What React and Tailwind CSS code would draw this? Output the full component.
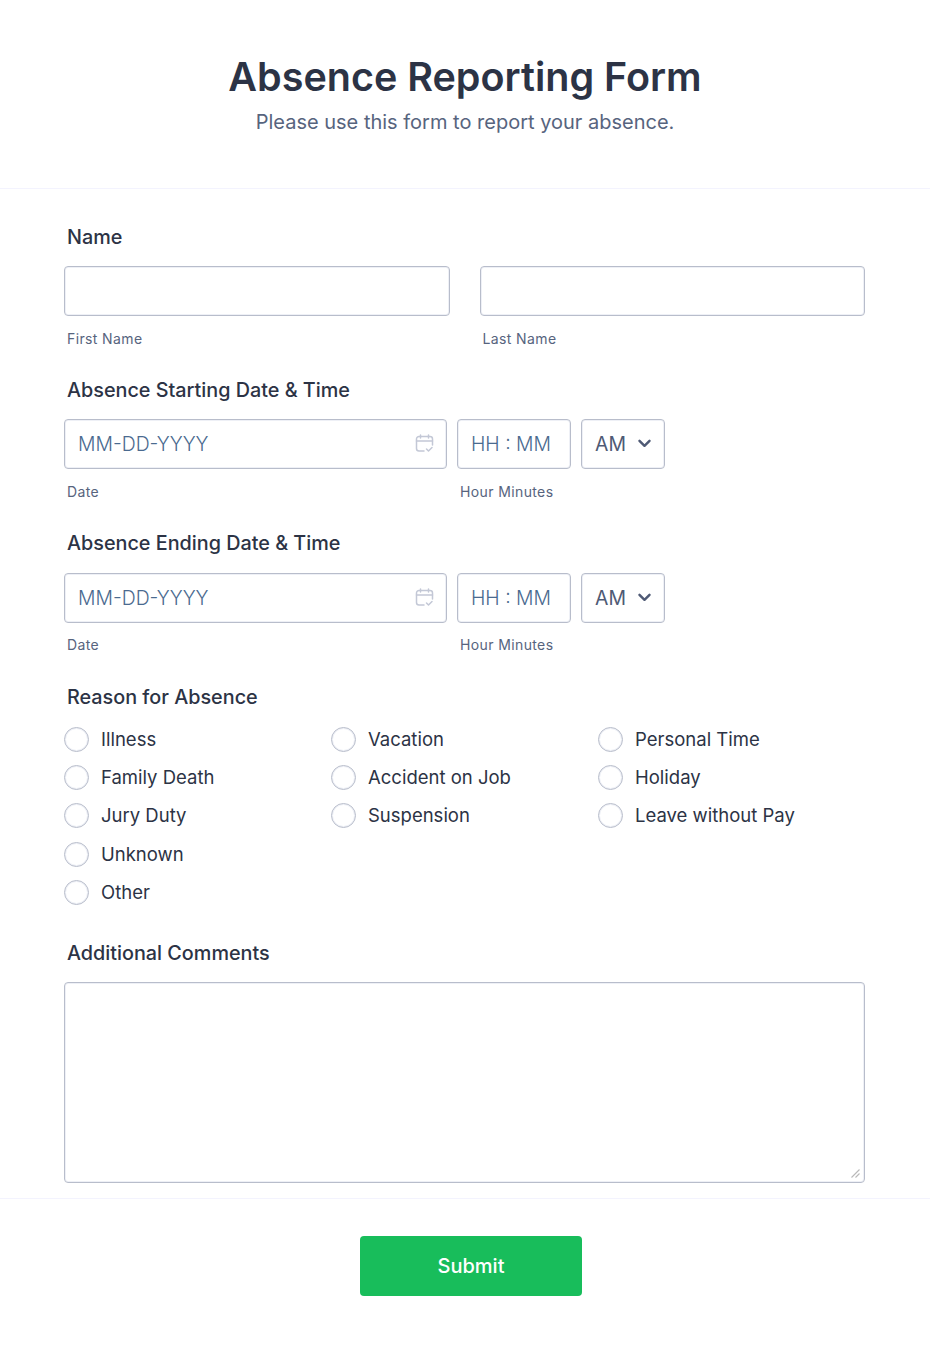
const inputCls = 'h-[49.5px] rounded-[4px] border border-[#b8bdcb] bg-white text-[19.4px] text-[#2c3345] shadow-[inset_0_0_0_1px_#eef0f6] outline-none placeholder:font-light placeholder:text-[#4a6a8f]'

const reasons = [
  ['Illness', 'Vacation', 'Personal Time'],
  ['Family Death', 'Accident on Job', 'Holiday'],
  ['Jury Duty', 'Suspension', 'Leave without Pay'],
  ['Unknown'],
  ['Other'],
]

function Label({ children, className = '' }) {
  return <div className={`pl-[3px] text-[19.8px] leading-[28px] font-medium text-[#2c3345] ${className}`}>{children}</div>
}

function Sub({ children, className = 'mt-[13.5px]' }) {
  return <div className={`pl-[3px] text-[14px] leading-[20px] tracking-[0.38px] text-[#57647e] ${className}`}>{children}</div>
}

function CalendarIcon() {
  return (
    <svg className="absolute right-[13px] top-[15px]" width="19" height="19" viewBox="0 0 19 19" fill="none" stroke="#c3c8d6" strokeWidth="1.5" strokeLinecap="round" strokeLinejoin="round">
      <path d="M9 17H4a2.5 2.5 0 0 1-2.5-2.5V5A2.5 2.5 0 0 1 4 2.5h11A2.5 2.5 0 0 1 17.5 5v6" />
      <path d="M1.5 7h16M5.5 1v3M13.5 1v3" />
      <path d="m11.5 15 2 2 3.5-3.5" />
    </svg>
  )
}

function DateRow({ title, className, rowTop = 'mt-[15px]', subTop }) {
  return (
    <div className={className}>
      <Label>{title}</Label>
      <div className={`${rowTop} flex`}>
        <div className="w-[383px]">
          <div className="relative">
            <input className={`${inputCls} w-full pl-[13px]`} placeholder="MM-DD-YYYY" />
            <CalendarIcon />
          </div>
          <Sub className={subTop}>Date</Sub>
        </div>
        <div className="ml-[10px] w-[114px]">
          <input className={`${inputCls} w-full pl-[13px]`} placeholder="HH : MM" />
          <Sub className={subTop}>Hour Minutes</Sub>
        </div>
        <div className={`${inputCls} ml-[10px] flex w-[84px] items-center justify-between pr-[13px] pl-[13px] text-[#4f5a75]`}>
          <span className="pt-[1px]">AM</span>
          <svg width="13" height="9" viewBox="0 0 13 9" fill="none" stroke="#4f5a75" strokeWidth="2.4" strokeLinecap="round" strokeLinejoin="round">
            <path d="M1.5 1.8 6.5 6.8l5-5" />
          </svg>
        </div>
      </div>
    </div>
  )
}

export default function App() {
  return (
    <div className="min-h-[1346px] bg-white font-['Inter',sans-serif]">
      <header className="h-[189px] border-b border-[#f3f3fe] pt-[52px] text-center">
        <h1 className="text-[39.5px] leading-[50px] font-semibold text-[#2c3345]">Absence Reporting Form</h1>
        <p className="mt-[6px] text-[20px] leading-[28px] text-[#57647e]">Please use this form to report your absence.</p>
      </header>

      <main className="pt-[34px] pr-[65px] pl-[64px]">
        <Label>Name</Label>
        <div className="mt-[15px] grid grid-cols-2 gap-[30px]">
          <div>
            <input className={`${inputCls} w-full`} />
            <Sub>First Name</Sub>
          </div>
          <div>
            <input className={`${inputCls} w-full`} />
            <Sub>Last Name</Sub>
          </div>
        </div>

        <DateRow title="Absence Starting Date & Time" className="mt-[27px]" />
        <DateRow title="Absence Ending Date & Time" className="mt-[27px]" rowTop="mt-[16px]" subTop="mt-[12.5px]" />

        <Label className="mt-[28px]">Reason for Absence</Label>
        <div className="mt-[16px] space-y-[13.2px]">
          {reasons.map((row, i) => (
            <div key={i} className="grid grid-cols-[267px_267px_1fr]">
              {row.map((r) => (
                <label key={r} className="flex h-[25px] items-center gap-[12px] text-[18.5px] leading-[25px] text-[#2c3345]">
                  <input type="radio" name="reason" className="block h-[25px] w-[25px] appearance-none rounded-full border border-[#b8bdcb] bg-white shadow-[inset_0_0_0_1px_#eef0f6]" />
                  {r}
                </label>
              ))}
            </div>
          ))}
        </div>

        <Label className="mt-[34px]">Additional Comments</Label>
        <div className="relative mt-[15px]">
          <textarea className="block h-[201px] w-full resize-none rounded-[4px] border border-[#b8bdcb] shadow-[inset_0_0_0_1px_#eef0f6] outline-none" />
          <svg className="absolute right-[5px] bottom-[5px]" width="9" height="9" viewBox="0 0 9 9" fill="none" stroke="#b9b9b9" strokeWidth="1.1">
            <path d="M0.5 8.5 8.5 0.5M4.5 8.5 8.5 4.5" />
          </svg>
        </div>
      </main>

      <footer className="mt-[15px] flex justify-center border-t border-[#f3f3fe] pt-[37px]">
        <button className="ml-[12px] h-[60px] w-[222px] rounded-[4px] bg-[#18bd5b] text-[20px] font-medium text-white">Submit</button>
      </footer>
    </div>
  )
}
